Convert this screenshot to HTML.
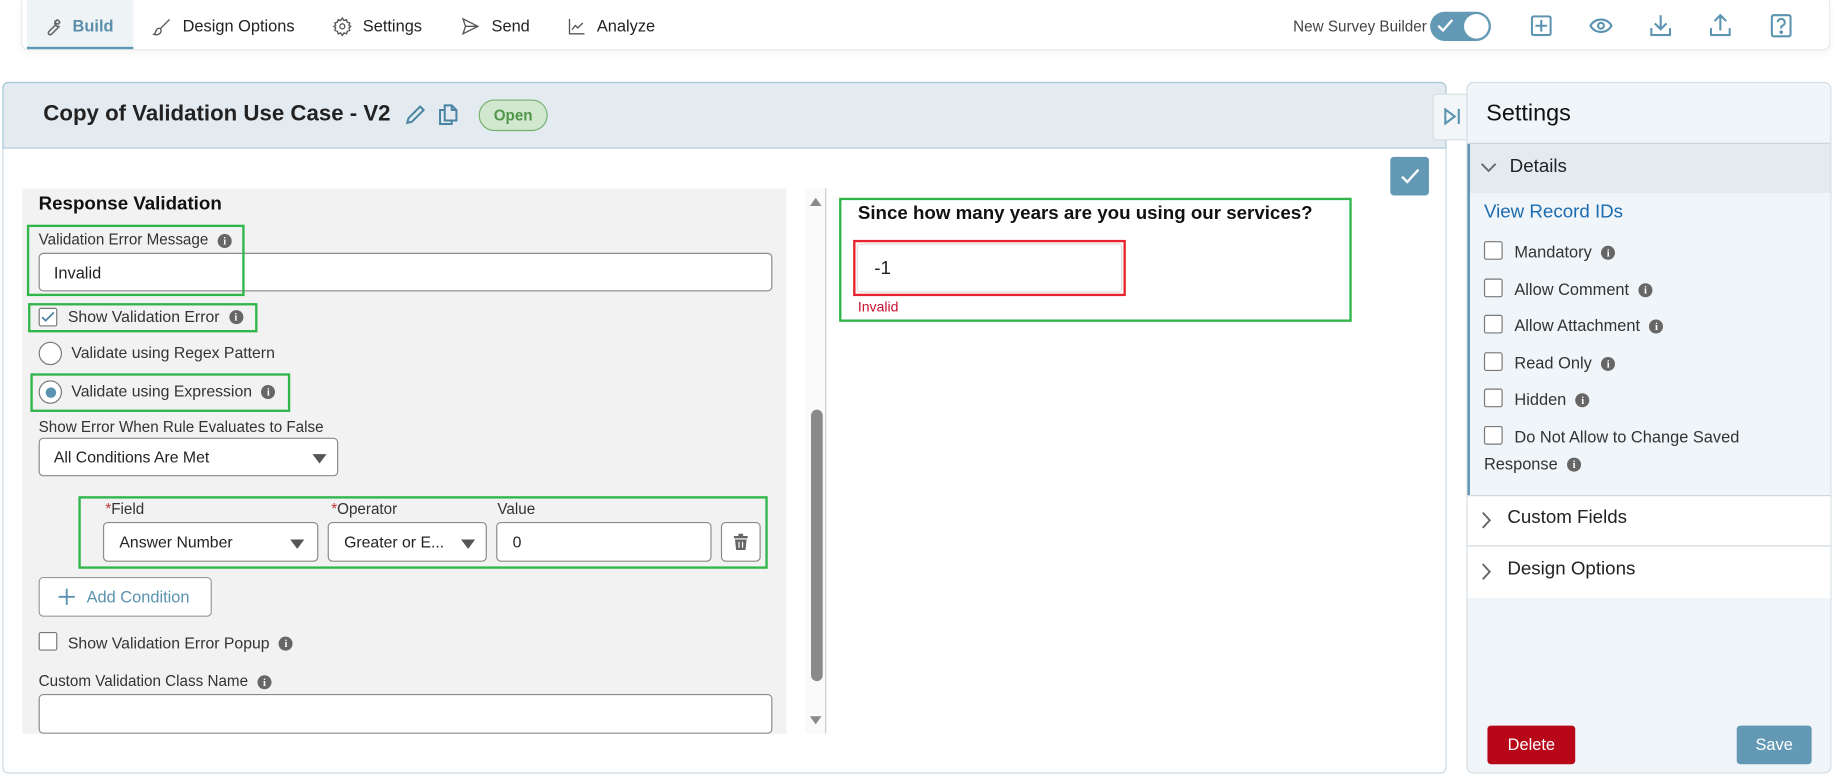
<!DOCTYPE html>
<html><head><meta charset="utf-8">
<style>
*{box-sizing:border-box;margin:0;padding:0}
html,body{width:1835px;height:776px;overflow:hidden;background:#fff;font-family:"Liberation Sans",sans-serif;color:#222}
#w{position:absolute;left:0;top:0;width:1568px;height:663px;transform:scale(1.1703);transform-origin:0 0}
.a{position:absolute}
.t{font-size:14px;color:#222;white-space:nowrap}
.lbl{font-size:13px;color:#333;white-space:nowrap}
.inp{position:absolute;background:#fff;border:1px solid #8a8a8a;border-radius:4px}
.gb{position:absolute;border:2px solid #2fb54a}
.info{display:inline-block;width:12px;height:12px;border-radius:50%;background:#666;color:#fff;font-size:9px;font-weight:bold;text-align:center;line-height:12px;vertical-align:middle;margin-left:8px;font-family:"Liberation Serif",serif}
.cb{position:absolute;width:16px;height:16px;border:1px solid #777;border-radius:2px;background:#fff}
.caret{position:absolute;width:0;height:0;border-left:6px solid transparent;border-right:6px solid transparent;border-top:8px solid #555}
.sc{font-size:14px;color:#333;white-space:nowrap;position:absolute}
</style></head><body><div id="w">

<!-- top bar -->
<div class="a" style="left:18px;top:0;width:1546px;height:43px;background:#fff;border:1px solid #e4e7ea;border-top:none;border-radius:0 0 6px 6px;box-shadow:0 3px 8px rgba(0,0,0,.04)"></div>
<div class="a" style="left:23px;top:0;width:91px;height:42px;background:#eef3f6;border-bottom:2px solid #5b9ab5"></div>
<svg class="a" style="left:36px;top:14px" width="18" height="18" viewBox="0 0 24 24" fill="none" stroke="#666" stroke-width="1.8"><path d="M14.7 6.3a4 4 0 0 0 5 5l-9 9a2 2 0 0 1-3-3l9-9a4 4 0 0 1-2-2z M14.7 6.3 17 4a4 4 0 0 1 3 3l-2.3 2.3"/></svg>
<div class="a t" style="left:62px;top:14px;font-weight:bold;color:#5a8eab">Build</div>
<svg class="a" style="left:130px;top:14px" width="17" height="18" viewBox="0 0 24 24" fill="none" stroke="#555" stroke-width="1.6"><path d="M21 3 10 14M10 14c-2-1-4 0-5 2-1 2-1 4-3 5 3 1 7 0 8-2 1-1 1-3 0-5z"/></svg>
<div class="a t" style="left:156px;top:14px">Design Options</div>
<svg class="a" style="left:284px;top:14px" width="17" height="17" viewBox="0 0 24 24" fill="none" stroke="#555" stroke-width="1.6"><circle cx="12" cy="12" r="3"/><path d="M12 2l2 3 3-1 1 3 3 1-1 3 2 1-2 2 1 3-3 1-1 3-3-1-2 3-2-3-3 1-1-3-3-1 1-3-2-2 2-1-1-3 3-1 1-3 3 1z"/></svg>
<div class="a t" style="left:310px;top:14px">Settings</div>
<svg class="a" style="left:393px;top:14px" width="18" height="17" viewBox="0 0 24 24" fill="none" stroke="#555" stroke-width="1.6"><path d="M3 3l18 9-18 9 3-9zM6 12h15"/></svg>
<div class="a t" style="left:420px;top:14px">Send</div>
<svg class="a" style="left:484px;top:14px" width="18" height="17" viewBox="0 0 24 24" fill="none" stroke="#555" stroke-width="1.6"><path d="M3 3v18h18M6 16l4-5 3 3 6-6"/></svg>
<div class="a t" style="left:510px;top:14px">Analyze</div>

<div class="a" style="left:1105px;top:15px;font-size:13px;color:#444">New Survey Builder</div>
<div class="a" style="left:1222px;top:10px;width:52px;height:25px;border-radius:13px;background:#6399b4"></div>
<div class="a" style="left:1251px;top:12px;width:21px;height:21px;border-radius:50%;background:#fff"></div>
<svg class="a" style="left:1228px;top:16px" width="14" height="12" viewBox="0 0 14 12" fill="none" stroke="#fff" stroke-width="2"><path d="M1 6l4 4 8-9"/></svg>
<svg class="a" style="left:1308px;top:13px" width="18" height="18" viewBox="0 0 18 18" fill="none" stroke="#5b93b0" stroke-width="1.8"><rect x="1" y="1" width="16" height="16" rx="1.5"/><path d="M9 4v10M4 9h10"/></svg>
<svg class="a" style="left:1358px;top:15px" width="20" height="14" viewBox="0 0 20 14" fill="none" stroke="#5b93b0" stroke-width="1.8"><path d="M1 7c4-7 14-7 18 0-4 7-14 7-18 0z"/><circle cx="10" cy="7" r="2.5"/></svg>
<svg class="a" style="left:1410px;top:12px" width="18" height="19" viewBox="0 0 18 19" fill="none" stroke="#5b93b0" stroke-width="1.8"><path d="M9 1v11M4 8l5 5 5-5M1 12v6h16v-6"/></svg>
<svg class="a" style="left:1461px;top:12px" width="18" height="19" viewBox="0 0 18 19" fill="none" stroke="#5b93b0" stroke-width="1.8"><path d="M9 14V2M4 6l5-5 5 5M1 12v6h16v-6"/></svg>
<svg class="a" style="left:1513px;top:12px" width="18" height="20" viewBox="0 0 18 20" fill="none" stroke="#5b93b0" stroke-width="1.8"><rect x="1" y="1" width="16" height="18" rx="1.5"/><path d="M6 7a3 3 0 1 1 4 3c-1 .5-1 1-1 2.5"/><circle cx="9" cy="15.5" r=".6" fill="#5b93b0"/></svg>

<!-- main card -->
<div class="a" style="left:2px;top:70px;width:1234px;height:591px;border:1px solid #c9dae3;border-radius:5px;background:#fff"></div>
<div class="a" style="left:2px;top:70px;width:1234px;height:57px;background:#e3ebf1;border:1px solid #a9c7d6;border-radius:5px 5px 0 0"></div>
<div class="a" style="left:37px;top:87px;font-size:19px;font-weight:bold;color:#222">Copy of Validation Use Case - V2</div>
<svg class="a" style="left:346px;top:89px" width="18" height="18" viewBox="0 0 18 18" fill="none" stroke="#4a84a3" stroke-width="1.7"><path d="M2 16l1-4L13 2l3 3L6 15z"/></svg>
<svg class="a" style="left:373px;top:88px" width="20" height="20" viewBox="0 0 20 20" fill="none" stroke="#4a84a3" stroke-width="1.7"><path d="M7 2h6l4 4v9H7z M13 2v4h4 M7 6H3v12h10v-3"/></svg>
<div class="a" style="left:409px;top:85px;width:59px;height:27px;border-radius:14px;background:#d2e7d0;border:1px solid #74b06e;color:#4f9547;font-size:13px;font-weight:bold;text-align:center;line-height:25px">Open</div>

<div class="a" style="left:1188px;top:134px;width:33px;height:33px;border-radius:3px;background:#6399b4"></div>
<svg class="a" style="left:1197px;top:144px" width="16" height="13" viewBox="0 0 16 13" fill="none" stroke="#fff" stroke-width="2"><path d="M1 7l4.5 4.5L15 1"/></svg>

<!-- left form -->
<div class="a" style="left:19px;top:161px;width:653px;height:466px;background:#f2f2f2"></div>
<div class="a" style="left:33px;top:166px;font-size:16px;font-weight:bold;color:#111">Response Validation</div>
<div class="a lbl" style="left:33px;top:197px">Validation Error Message<span class="info">i</span></div>
<div class="inp" style="left:33px;top:216px;width:627px;height:33px"></div>
<div class="a t" style="left:46px;top:225px">Invalid</div>
<div class="gb" style="left:23px;top:192px;width:186px;height:61px"></div>

<div class="cb" style="left:33px;top:263px"></div>
<svg class="a" style="left:35px;top:266px" width="12" height="10" viewBox="0 0 12 10" fill="none" stroke="#4a84a3" stroke-width="1.5"><path d="M1 5l3 3 7-7"/></svg>
<div class="a lbl" style="left:58px;top:263px;font-size:13.5px">Show Validation Error<span class="info">i</span></div>
<div class="gb" style="left:24px;top:259px;width:196px;height:25px"></div>

<div class="a" style="left:33px;top:292px;width:20px;height:20px;border-radius:50%;border:1px solid #777;background:#fff"></div>
<div class="a lbl" style="left:61px;top:294px;font-size:13.5px">Validate using Regex Pattern</div>
<div class="a" style="left:33px;top:325px;width:20px;height:20px;border-radius:50%;border:1px solid #777;background:#fff"></div>
<div class="a" style="left:38.5px;top:330.5px;width:9px;height:9px;border-radius:50%;background:#5b93b0"></div>
<div class="a lbl" style="left:61px;top:327px;font-size:13.5px">Validate using Expression<span class="info">i</span></div>
<div class="gb" style="left:26px;top:319px;width:222px;height:33px"></div>

<div class="a lbl" style="left:33px;top:357px">Show Error When Rule Evaluates to False</div>
<div class="inp" style="left:33px;top:374px;width:256px;height:33px"></div>
<div class="a t" style="left:46px;top:383px;font-size:13.5px">All Conditions Are Met</div>
<div class="caret" style="left:267px;top:388px"></div>

<div class="a lbl" style="left:90px;top:427px"><span style="color:#c23934">*</span>Field</div>
<div class="a lbl" style="left:283px;top:427px"><span style="color:#c23934">*</span>Operator</div>
<div class="a lbl" style="left:425px;top:427px">Value</div>
<div class="inp" style="left:88px;top:446px;width:184px;height:34px"></div>
<div class="a t" style="left:102px;top:456px;font-size:13.5px">Answer Number</div>
<div class="caret" style="left:248px;top:461px"></div>
<div class="inp" style="left:280px;top:446px;width:136px;height:34px"></div>
<div class="a t" style="left:294px;top:456px;font-size:13.5px">Greater or E...</div>
<div class="caret" style="left:394px;top:461px"></div>
<div class="inp" style="left:424px;top:446px;width:184px;height:34px"></div>
<div class="a t" style="left:438px;top:456px;font-size:13.5px">0</div>
<div class="inp" style="left:616px;top:446px;width:34px;height:34px"></div>
<svg class="a" style="left:627px;top:456px" width="12" height="14" viewBox="0 0 12 14" fill="#666"><rect x="0" y="2" width="12" height="2"/><rect x="4" y="0" width="4" height="2"/><path d="M1 5h10l-1 9H2z"/><rect x="4" y="7" width="1" height="5" fill="#fff"/><rect x="7" y="7" width="1" height="5" fill="#fff"/></svg>
<div class="gb" style="left:67px;top:424px;width:589px;height:62px"></div>

<div class="inp" style="left:33px;top:493px;width:148px;height:34px;border-color:#999"></div>
<svg class="a" style="left:50px;top:503px" width="14" height="14" viewBox="0 0 14 14" stroke="#5b93b0" stroke-width="1.6"><path d="M7 0v14M0 7h14"/></svg>
<div class="a" style="left:74px;top:502px;font-size:14px;color:#5b93b0">Add Condition</div>

<div class="cb" style="left:33px;top:540px"></div>
<div class="a lbl" style="left:58px;top:542px;font-size:13.5px">Show Validation Error Popup<span class="info">i</span></div>
<div class="a lbl" style="left:33px;top:574px">Custom Validation Class Name<span class="info">i</span></div>
<div class="inp" style="left:33px;top:593px;width:627px;height:34px"></div>

<!-- scrollbar -->
<div class="a" style="left:688px;top:161px;width:18px;height:466px;background:#fafafa;border-right:1px solid #ccc"></div>
<div class="a" style="left:692px;top:169px;width:0;height:0;border-left:5px solid transparent;border-right:5px solid transparent;border-bottom:7px solid #8a8a8a"></div>
<div class="a" style="left:693px;top:350px;width:10px;height:232px;border-radius:5px;background:#8a8a8a"></div>
<div class="a" style="left:692px;top:612px;width:0;height:0;border-left:5px solid transparent;border-right:5px solid transparent;border-top:7px solid #8a8a8a"></div>

<!-- preview -->
<div class="gb" style="left:717px;top:169px;width:438px;height:106px"></div>
<div class="a" style="left:733px;top:174px;font-size:16px;font-weight:bold;color:#111">Since how many years are you using our services?</div>
<div class="a" style="left:729px;top:205px;width:233px;height:48px;border:2px solid #e8232b"></div>
<div class="a" style="left:732px;top:208px;width:227px;height:42px;border:1px solid #ddd;border-radius:3px"></div>
<div class="a" style="left:747px;top:221px;font-size:16px;color:#222">-1</div>
<div class="a" style="left:733px;top:255px;font-size:12px;color:#c8102e">Invalid</div>

<!-- collapse tab -->
<div class="a" style="left:1224px;top:80px;width:32px;height:40px;background:#f2f6f8;border:1px solid #d6dde2;border-radius:4px 0 0 4px"></div>
<svg class="a" style="left:1233px;top:92px" width="16" height="15" viewBox="0 0 16 15" fill="none" stroke="#5b93b0" stroke-width="1.8"><path d="M2 1.5l8 6-8 6z M13.5 1v13"/></svg>

<!-- settings panel -->
<div class="a" style="left:1253px;top:70px;width:312px;height:591px;background:#eff5f8;border:1px solid #d4dde3;border-radius:6px"></div>
<div class="a" style="left:1270px;top:86px;font-size:20px;color:#111">Settings</div>
<div class="a" style="left:1254px;top:122px;width:310px;height:1px;background:#c9d3da"></div>
<div class="a" style="left:1254px;top:123px;width:310px;height:42px;background:#e3ebf1"></div>
<div class="a" style="left:1254px;top:123px;width:2px;height:300px;background:#5b93b0"></div>
<svg class="a" style="left:1265px;top:139px" width="14" height="9" viewBox="0 0 14 9" fill="none" stroke="#666" stroke-width="1.6"><path d="M1 1l6 6 6-6"/></svg>
<div class="a" style="left:1290px;top:134px;font-size:16px;color:#222">Details</div>
<div class="a" style="left:1268px;top:173px;font-size:16px;color:#1c6bb0">View Record IDs</div>
<div class="cb" style="left:1268px;top:206px"></div><div class="sc" style="left:1294px;top:207px">Mandatory<span class="info">i</span></div>
<div class="cb" style="left:1268px;top:238px"></div><div class="sc" style="left:1294px;top:239px">Allow Comment<span class="info">i</span></div>
<div class="cb" style="left:1268px;top:269px"></div><div class="sc" style="left:1294px;top:270px">Allow Attachment<span class="info">i</span></div>
<div class="cb" style="left:1268px;top:301px"></div><div class="sc" style="left:1294px;top:302px">Read Only<span class="info">i</span></div>
<div class="cb" style="left:1268px;top:332px"></div><div class="sc" style="left:1294px;top:333px">Hidden<span class="info">i</span></div>
<div class="cb" style="left:1268px;top:364px"></div><div class="sc" style="left:1294px;top:365px">Do Not Allow to Change Saved</div>
<div class="sc" style="left:1268px;top:388px">Response<span class="info">i</span></div>
<div class="a" style="left:1254px;top:423px;width:310px;height:88px;background:#fff;border-top:1px solid #cfd6dc"></div>
<div class="a" style="left:1254px;top:466px;width:310px;height:1px;background:#cfd6dc"></div>
<svg class="a" style="left:1266px;top:437px" width="9" height="15" viewBox="0 0 9 15" fill="none" stroke="#666" stroke-width="1.6"><path d="M1 1l6 6.5L1 14"/></svg>
<div class="a" style="left:1288px;top:434px;font-size:16px;color:#222">Custom Fields</div>
<svg class="a" style="left:1266px;top:481px" width="9" height="15" viewBox="0 0 9 15" fill="none" stroke="#666" stroke-width="1.6"><path d="M1 1l6 6.5L1 14"/></svg>
<div class="a" style="left:1288px;top:478px;font-size:16px;color:#222">Design Options</div>
<div class="a" style="left:1271px;top:620px;width:75px;height:33px;border-radius:3px;background:#b80718;color:#fff;font-size:14px;text-align:center;line-height:33px">Delete</div>
<div class="a" style="left:1484px;top:620px;width:64px;height:33px;border-radius:3px;background:#6399b4;color:#fff;font-size:14px;text-align:center;line-height:33px">Save</div>

</div></body></html>
